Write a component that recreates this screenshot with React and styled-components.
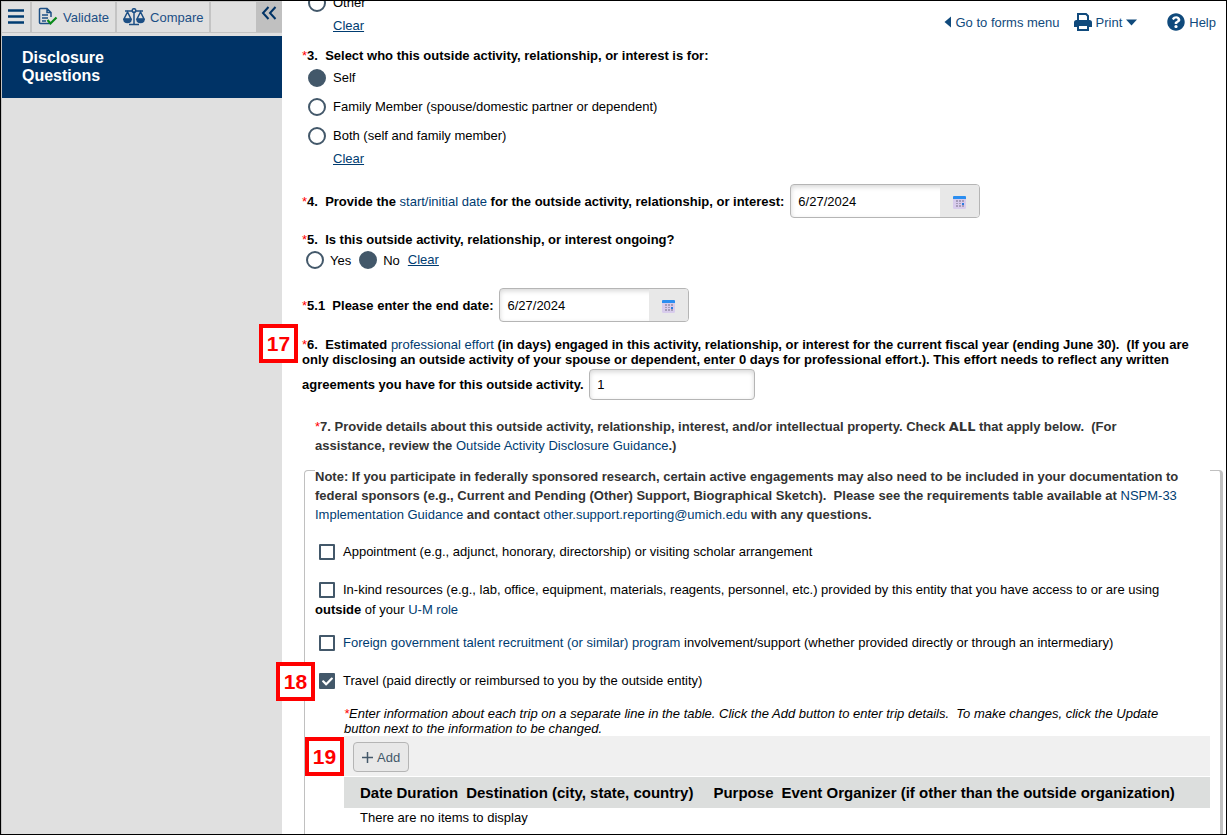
import React from "react";
import styled, { createGlobalStyle, css } from "styled-components";
import { FaCheck, FaQuestionCircle } from "react-icons/fa";

const GlobalStyle = createGlobalStyle`
  *, *::before, *::after {
    box-sizing: border-box;
  }
  body {
    margin: 0;
    background: #fff;
    color: #000;
    font: 13px/15px Arial, "Liberation Sans", sans-serif;
  }
`;

const Frame = styled.div`
  display: flex;
  height: 100vh;
  border: 1px solid #000;
  overflow: hidden;
`;

const Sidebar = styled.aside`
  flex: 0 0 281px;
  background: #e0e0e0;
  border-left: 1px solid #c4c4c4;
`;

const ToolBar = styled.div`
  display: flex;
  height: 32px;
  border-top: 1px solid #c4c4c4;
  border-bottom: 1px solid #c4c4c4;
`;

const ToolButton = styled.button`
  display: flex;
  align-items: center;
  gap: 5px;
  padding: 0 6px;
  border: 0;
  border-right: 2px solid #c4c4c4;
  background: none;
  color: #1c4f85;
  font: inherit;
`;

const CollapseButton = styled.button`
  display: flex;
  justify-content: center;
  width: 26px;
  margin-left: auto;
  padding: 4px 0;
  border: 0;
  background: #c0c0c0;
`;

const SideLink = styled.a`
  display: block;
  margin-top: 3px;
  padding: 13px 140px 13px 20px;
  background: #003366;
  color: #fff;
  font-size: 16px;
  font-weight: bold;
  line-height: 18px;
  text-decoration: none;
`;

const Main = styled.main`
  position: relative;
  flex: 1;
  min-width: 0;
`;

const TopLinks = styled.nav`
  position: absolute;
  top: 11px;
  right: 10px;
  display: flex;
  gap: 14px;
`;

const TopLink = styled.a`
  display: flex;
  align-items: center;
  gap: 4px;
  height: 20px;
  color: #104a7c;
  text-decoration: none;
  &:last-child {
    margin-left: 16px;
  }
`;

const Form = styled.form`
  margin-top: -13px;
  padding: 0 3px 0 20px;
`;

const Question = styled.div`
  position: relative;
  margin-bottom: ${props => props.$gap || 15}px;
  padding-right: 12px;
  font-weight: ${props => (props.$bold ? "bold" : "normal")};
`;

const Title = styled.div`
  font-weight: bold;
  line-height: 14px;
`;

const Star = styled.span`
  color: #f00;
  font-weight: normal;
`;

const Link = styled.a`
  color: #003c71;
  font-weight: normal;
  text-decoration: none;
`;

const ClearLink = styled(Link)`
  text-decoration: underline;
  line-height: 18px;
`;

const ClearRow = styled.div`
  padding-left: 31px;
`;

const Option = styled.label`
  display: flex;
  align-items: center;
  gap: 7px;
  height: 29px;
  padding-left: 6px;
`;

const InlineOptions = styled.div`
  display: flex;
  align-items: center;
  gap: 8px;
  padding: 4px 0 0 4px;
  label {
    display: flex;
    align-items: center;
    gap: 6px;
  }
`;

const Radio = styled.input.attrs({ type: "radio" })`
  appearance: none;
  width: 18px;
  height: 18px;
  margin: 0;
  border: 2px solid #43586a;
  border-radius: 50%;
  background: #fff;
  &:checked {
    background: #43586a;
  }
`;

const field = css`
  border: 1px solid #b5b5b5;
  border-radius: 4px;
  background: #fff;
  box-shadow: inset 0 2px 5px rgba(0, 0, 0, 0.16);
`;

const FieldRow = styled.div`
  display: flex;
  align-items: center;
  gap: 6px;
`;

const DateBox = styled.span`
  ${field}
  display: flex;
  width: 190px;
  height: 34px;
  overflow: hidden;
  input {
    flex: 1;
    min-width: 0;
    padding: 0 7px;
    border: 0;
    background: none;
    font: inherit;
    font-weight: normal;
  }
  button {
    display: flex;
    align-items: center;
    justify-content: center;
    width: 39px;
    padding: 2px 0 0;
    border: 0;
    background: #e8e8e8;
  }
`;

const DaysInput = styled.input`
  ${field}
  width: 166px;
  height: 31px;
  margin: 2px 0 0 2px;
  padding: 0 7px;
  font: inherit;
  font-weight: normal;
`;

const Marker = styled.span`
  position: absolute;
  top: ${props => props.$top}px;
  left: ${props => props.$left}px;
  z-index: 1;
  width: 39px;
  border: 4px solid #f00;
  background: #fff;
  color: #f00;
  font-size: 21px;
  font-weight: bold;
  line-height: 31px;
  text-align: center;
`;

const Details = styled.fieldset`
  min-width: 0;
  margin: 0 0 0 2px;
  padding: 0 10px 20px;
  border: 1px solid #c0c0c0;
  border-right-width: 3px;
  border-radius: 4px;
`;

const Legend = styled.legend`
  width: 100%;
  padding: 0;
  color: #333;
  font-weight: bold;
  line-height: 19px;
  p {
    margin: 0 0 12px;
    padding-right: 24px;
  }
  p:last-child {
    margin: 0;
  }
`;

const Big = styled.span`
  font-family: Verdana, "DejaVu Sans", sans-serif;
`;

const CheckItem = styled.div`
  position: relative;
  margin-top: ${props => props.$gap || 18}px;
  padding-right: 12px;
  line-height: 20px;
`;

const CheckBox = styled.span`
  display: inline-grid;
  margin: 2px 8px 0 4px;
  vertical-align: top;
  input {
    grid-area: 1 / 1;
    appearance: none;
    width: 16px;
    height: 16px;
    margin: 0;
    border: 2px solid #43586a;
    border-radius: 1px;
    background: #fff;
  }
  input:checked {
    background: #43586a;
  }
  svg {
    grid-area: 1 / 1;
    place-self: center;
    z-index: 1;
    color: #fff;
    pointer-events: none;
  }
`;

const Trips = styled.div`
  margin: 15px 0 0 29px;
`;

const Hint = styled.p`
  margin: 0;
  padding-right: 24px;
  font-style: italic;
`;

const TripBar = styled.div`
  position: relative;
  padding: 6px 9px 4px;
  margin-bottom: 1px;
  background: #f0f0f0;
`;

const AddButton = styled.button`
  display: flex;
  align-items: center;
  gap: 4px;
  height: 30px;
  padding: 0 8px;
  border: 1px solid #b5b5b5;
  border-radius: 4px;
  background: #e8e8e8;
  color: #43586a;
  font: inherit;
`;

const TripTable = styled.table`
  width: 100%;
  border-collapse: collapse;
  th {
    height: 31px;
    padding: 0 8px 0 0;
    background: #dcdedd;
    font-size: 15px;
    text-align: left;
    white-space: nowrap;
  }
  th:first-child {
    padding-right: 4px;
  }
  th:nth-child(3) {
    padding-right: 20px;
  }
  th:last-child {
    width: 100%;
  }
  th:first-child,
  td {
    padding-left: 16px;
  }
  td {
    height: 18px;
  }
`;

const MenuIcon = () => (
  <svg width="16" height="16" viewBox="0 0 16 16" stroke="#003c71" strokeWidth="2.5">
    <path d="M0 1.5h16M0 7.5h16M0 13.5h16" />
  </svg>
);

const ValidateIcon = () => (
  <svg width="20" height="20" viewBox="0 0 20 20" fill="none" stroke="#1c4f85" strokeWidth="1.5">
    <path d="M12 16.5H2.5a1 1 0 0 1-1-1v-13a1 1 0 0 1 1-1H9l4 4V10M9 1.5v4h4M4 8h6M4 11h6M4 14h4" />
    <path d="m9.5 13 3 3.5 6-6" stroke="#0a8a1a" strokeWidth="2.2" />
  </svg>
);

const ScalesIcon = () => (
  <svg width="22" height="18" viewBox="0 0 22 18" fill="none" stroke="#1c4f85" strokeWidth="1.5">
    <circle cx="11" cy="2.5" r="1.8" />
    <path d="M2 3h7M13 3h7M11 4.5V16M6 16.5h10" />
    <path d="M4.5 4 1 11h7zM17.500 4 14 11h7z" />
    <path d="M1 11.500a3.500 3 0 0 0 7 0zM14 11.500a3.500 3 0 0 0 7 0z" fill="#1c4f85" />
  </svg>
);

const ChevronsIcon = () => (
  <svg width="16" height="14" viewBox="0 0 16 14" fill="none" stroke="#003366" strokeWidth="2">
    <path d="M7.500 1 2 7l5.500 6M14.500 1 9 7l5.500 6" />
  </svg>
);

const CaretLeft = () => (
  <svg width="7" height="12" viewBox="0 0 7 12" fill="#104a7c">
    <path d="M7 .5v11L.5 6z" />
  </svg>
);

const CaretDown = () => (
  <svg width="11" height="7" viewBox="0 0 11 7" fill="#104a7c">
    <path d="M0 .5h11L5.500 6.500z" />
  </svg>
);

const PrintIcon = () => (
  <svg width="18" height="18" viewBox="0 0 18 18" fill="none" stroke="#104a7c" strokeWidth="2">
    <path d="M4 9V1h8l2 2v6" />
    <path d="M0 14V9.500A2.500 2.500 0 0 1 2.500 7h13A2.500 2.500 0 0 1 18 9.500V14h-3v-2H3v2z" fill="#104a7c" stroke="none" />
    <path d="M4 12v5h10v-5z" fill="#fff" />
  </svg>
);

const CalendarIcon = () => (
  <svg width="13" height="13" viewBox="0 0 13 13">
    <rect width="13" height="13" rx="1.500" fill="#d8ccec" />
    <path d="M0 3V1a1 1 0 0 1 1-1h11a1 1 0 0 1 1 1v2z" fill="#2b8ef0" />
    <path d="M3 4h2v2H3zM6 4h2v2H6zM9 4h2v2H9zM3 7h2v1H3zM6 7h2v1H6zM3 9h2v2H3zM6 9h2v2H6z" fill="#a79db8" />
    <path d="M9 7h2v2H9z" fill="#2b7de0" />
    <path d="M9 9h2v2H9z" fill="#a79db8" />
  </svg>
);

const PlusIcon = () => (
  <svg width="11" height="11" viewBox="0 0 11 11" stroke="#43586a" strokeWidth="1.500">
    <path d="M5.500 0v11M0 5.500h11" />
  </svg>
);

const DateField = ({ id, value }) => (
  <DateBox>
    <input id={id} defaultValue={value} />
    <button type="button" aria-label="Choose date">
      <CalendarIcon />
    </button>
  </DateBox>
);

const Check = ({ id, checked, children }) => (
  <>
    <CheckBox>
      <input type="checkbox" id={id} defaultChecked={checked} />
      {checked && <FaCheck size={11} />}
    </CheckBox>
    <label htmlFor={id}>{children}</label>
  </>
);

const App = () => (
  <>
    <GlobalStyle />
    <Frame>
      <Sidebar>
        <ToolBar>
          <ToolButton aria-label="Menu">
            <MenuIcon />
          </ToolButton>
          <ToolButton>
            <ValidateIcon />
            Validate
          </ToolButton>
          <ToolButton>
            <ScalesIcon />
            Compare
          </ToolButton>
          <CollapseButton aria-label="Collapse">
            <ChevronsIcon />
          </CollapseButton>
        </ToolBar>
        <SideLink href="#questions">Disclosure Questions</SideLink>
      </Sidebar>
      <Main>
        <TopLinks>
          <TopLink href="#menu">
            <CaretLeft />
            Go to forms menu
          </TopLink>
          <TopLink href="#print">
            <PrintIcon />
            Print
            <CaretDown />
          </TopLink>
          <TopLink href="#help">
            <FaQuestionCircle size={18} />
            Help
          </TopLink>
        </TopLinks>
        <Form>
          <Question $gap={14}>
            <Option>
              <Radio name="type" />
              Other
            </Option>
            <ClearRow>
              <ClearLink href="#clear">Clear</ClearLink>
            </ClearRow>
          </Question>

          <Question $gap={16}>
            <Title>
              <Star>*</Star>3.&nbsp; Select who this outside activity, relationship, or interest is for:
            </Title>
            <Option>
              <Radio name="who" defaultChecked />
              Self
            </Option>
            <Option>
              <Radio name="who" />
              Family Member (spouse/domestic partner or dependent)
            </Option>
            <Option>
              <Radio name="who" />
              Both (self and family member)
            </Option>
            <ClearRow>
              <ClearLink href="#clear">Clear</ClearLink>
            </ClearRow>
          </Question>

          <Question $bold>
            <FieldRow>
              <label htmlFor="start">
                <Star>*</Star>4.&nbsp; Provide the <Link href="#start">start/initial date</Link> for the outside
                activity, relationship, or interest:
              </label>
              <DateField id="start" value="6/27/2024" />
            </FieldRow>
          </Question>

          <Question $gap={19}>
            <Title>
              <Star>*</Star>5.&nbsp; Is this outside activity, relationship, or interest ongoing?
            </Title>
            <InlineOptions>
              <label>
                <Radio name="ongoing" />
                Yes
              </label>
              <label>
                <Radio name="ongoing" defaultChecked />
                No
              </label>
              <ClearLink href="#clear">Clear</ClearLink>
            </InlineOptions>
          </Question>

          <Question $bold>
            <FieldRow>
              <label htmlFor="end">
                <Star>*</Star>5.1&nbsp; Please enter the end date:
              </label>
              <DateField id="end" value="6/27/2024" />
            </FieldRow>
          </Question>

          <Question $bold $gap={17}>
            <Marker $top={-13} $left={-43}>
              17
            </Marker>
            <label htmlFor="days">
              <Star>*</Star>6.&nbsp; Estimated <Link href="#effort">professional effort</Link> (in days) engaged in
              this activity, relationship, or interest for the current fiscal year (ending June 30).&nbsp; (If you are
              only disclosing an outside activity of your spouse or dependent, enter 0 days for professional effort.).
              This effort needs to reflect any written agreements you have for this outside activity.
            </label>{" "}
            <DaysInput id="days" defaultValue="1" />
          </Question>

          <Details>
            <Legend>
              <p>
                <Star>*</Star>7. Provide details about this outside activity, relationship, interest, and/or
                intellectual property. Check <Big>ALL</Big> that apply below.&nbsp; (For assistance, review the{" "}
                <Link href="#guidance">Outside Activity Disclosure Guidance</Link>.)
              </p>
              <p>
                Note: If you participate in federally sponsored research, certain active engagements may also need to
                be included in your documentation to federal sponsors (e.g., Current and Pending (Other) Support,
                Biographical Sketch).&nbsp; Please see the requirements table available at{" "}
                <Link href="#nspm">NSPM-33 Implementation Guidance</Link> and contact{" "}
                <Link href="#mail">other.support.reporting@umich.edu</Link> with any questions.
              </p>
            </Legend>

            <CheckItem>
              <Check id="appointment">
                Appointment (e.g., adjunct, honorary, directorship) or visiting scholar arrangement
              </Check>
            </CheckItem>
            <CheckItem>
              <Check id="inkind">
                In-kind resources (e.g., lab, office, equipment, materials, reagents, personnel, etc.) provided by this
                entity that you have access to or are using <b>outside</b> of your <Link href="#role">U-M role</Link>
              </Check>
            </CheckItem>
            <CheckItem $gap={13}>
              <Check id="talent">
                <Link href="#talent">Foreign government talent recruitment (or similar) program</Link>{" "}
                involvement/support (whether provided directly or through an intermediary)
              </Check>
            </CheckItem>
            <CheckItem>
              <Marker $top={-9} $left={-39}>
                18
              </Marker>
              <Check id="travel" checked>
                Travel (paid directly or reimbursed to you by the outside entity)
              </Check>
            </CheckItem>

            <Trips>
              <Hint>
                <Star>*</Star>Enter information about each trip on a separate line in the table. Click the Add button
                to enter trip details.&nbsp; To make changes, click the Update button next to the information to be
                changed.
              </Hint>
              <TripBar>
                <Marker $top={1} $left={-39}>
                  19
                </Marker>
                <AddButton type="button">
                  <PlusIcon />
                  Add
                </AddButton>
              </TripBar>
              <TripTable>
                <thead>
                  <tr>
                    <th>Date</th>
                    <th>Duration</th>
                    <th>Destination (city, state, country)</th>
                    <th>Purpose</th>
                    <th>Event Organizer (if other than the outside organization)</th>
                  </tr>
                </thead>
                <tbody>
                  <tr>
                    <td colSpan={5}>There are no items to display</td>
                  </tr>
                </tbody>
              </TripTable>
            </Trips>
          </Details>
        </Form>
      </Main>
    </Frame>
  </>
);

export default App;
